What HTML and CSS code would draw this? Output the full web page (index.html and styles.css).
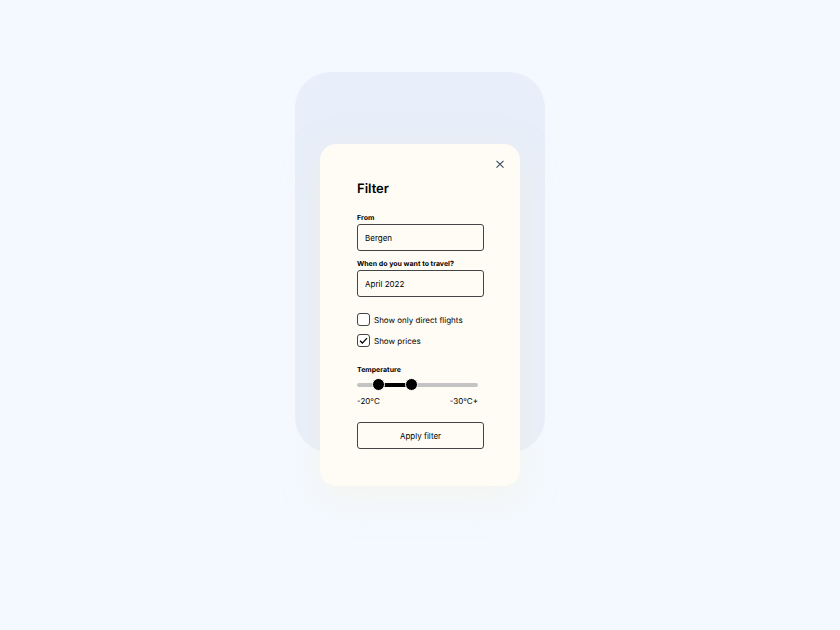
FILE: index.html
```html
<!DOCTYPE html>
<html lang="en">
<head>
    <meta charset="UTF-8">
    <meta name="viewport" content="width=device-width, initial-scale=1.0">
    <title>Filter</title>
    <link rel="stylesheet" href="styles.css">
</head>
<body>
    <main class="stage">
        <div class="backdrop"></div>

        <section class="card">
            <div class="card-top">
                <button type="button" class="close" aria-label="Close">
                    <svg viewBox="0 0 16 16" width="16" height="16" aria-hidden="true">
                        <path d="M4.5 4.8l7 6.8M11.5 4.8l-7 6.8" fill="none" stroke="#33475b" stroke-width="1.1"/>
                    </svg>
                </button>
            </div>

            <form class="filter-form">
                <h1>Filter</h1>

                <div class="field">
                    <label for="from">From</label>
                    <input type="text" id="from" value="Bergen">
                </div>

                <div class="field">
                    <label for="when">When do you want to travel?</label>
                    <input type="text" id="when" value="April 2022">
                </div>

                <div class="checks">
                    <label class="check"><input type="checkbox"> Show only direct flights</label>
                    <label class="check"><input type="checkbox" checked> Show prices</label>
                </div>

                <fieldset class="temperature">
                    <legend>Temperature</legend>
                    <div class="range" style="--from: 18%; --to: 45%">
                        <input type="range" min="-20" max="30" value="-13" aria-label="Lowest temperature">
                        <input type="range" min="-20" max="30" value="2" aria-label="Highest temperature">
                    </div>
                    <div class="range-labels">
                        <span>-20°C</span>
                        <span>-30°C+</span>
                    </div>
                </fieldset>

                <button type="submit" class="apply">Apply filter</button>
            </form>
        </section>
    </main>
</body>
</html>
```

FILE: styles.css
```css
* {
    box-sizing: border-box;
}

body {
    margin: 0;
    padding: 72px 20px;
    background-color: #f4f9ff;
    font-family: Inter, sans-serif;
    font-size: 8px;
    line-height: 12px;
    text-rendering: geometricPrecision;
    color: #000;
}

.stage {
    display: grid;
    max-width: 250px;
    margin: 0 auto;
}

/* The card lies over the backdrop and hangs out below it */
.backdrop,
.card {
    grid-area: 1 / 1;
}

.backdrop {
    margin-bottom: 33px;
    background-color: #e8effa;
    border-radius: 36px;
}

.card {
    margin: 72px 25px 0;
    background-color: #fffcf5;
    border-radius: 16px;
    box-shadow: 0 12px 36px rgba(246, 236, 205, 0.35);
}

.card-top {
    display: flex;
    justify-content: flex-end;
    padding: 12px 12px 0;
}

.close {
    display: flex;
    padding: 0;
    border: none;
    background: none;
    cursor: pointer;
}

.filter-form {
    padding: 9px 36px 37px 37px;
}

h1 {
    margin: 0 0 15px;
    font-size: 13px;
    line-height: 16px;
    font-weight: 600;
}

.field {
    display: flex;
    flex-direction: column;
    margin-bottom: 7px;
}

.field label,
legend {
    padding: 0;
    font-size: 7px;
    font-weight: 700;
}

.field input,
.apply {
    width: 100%;
    height: 27px;
    padding: 0 7px;
    border: 1px solid #444;
    border-radius: 3px;
    background: none;
    font: inherit;
    color: #000;
}

.checks {
    display: flex;
    flex-direction: column;
    gap: 8px;
    margin-top: 16px;
}

.check {
    display: flex;
    align-items: center;
    gap: 4px;
    white-space: nowrap;
}

.check input {
    appearance: none;
    width: 13px;
    height: 13px;
    margin: 0;
    border: 1px solid #444;
    border-radius: 3px;
    background-color: #fff;
}

.check input:checked {
    background-image: url("data:image/svg+xml,%3Csvg xmlns='http://www.w3.org/2000/svg' viewBox='0 0 12 12'%3E%3Cpath d='M2.2 6.2l2.6 2.6 5-5.4' fill='none' stroke='%23000' stroke-width='1.4'/%3E%3C/svg%3E");
}

.temperature {
    margin: 17px 6px 15px 0;
    padding: 0;
    border: none;
}

/* Two sliders share one track */
.range {
    display: grid;
    align-items: center;
    margin: 2px 0 4px;
}

.range::before {
    content: "";
    grid-area: 1 / 1;
    height: 4px;
    border-radius: 2px;
    background: linear-gradient(to right, #c4c4c4 var(--from), #000 var(--from), #000 var(--to), #c4c4c4 var(--to));
}

.range input {
    grid-area: 1 / 1;
    appearance: none;
    width: 100%;
    height: 13px;
    margin: 0;
    background: none;
    pointer-events: none;
}

.range input::-webkit-slider-thumb {
    appearance: none;
    width: 13px;
    height: 13px;
    border: 1px solid #fffcf5;
    border-radius: 50%;
    background-color: #000;
    pointer-events: auto;
    cursor: pointer;
}

.range-labels {
    display: flex;
    justify-content: space-between;
}

.apply {
    cursor: pointer;
}
```
